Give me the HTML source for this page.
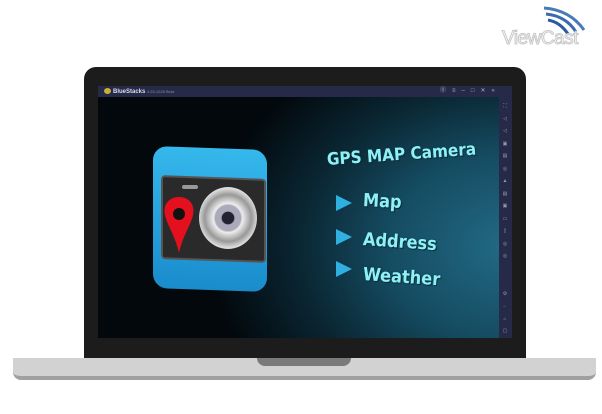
<!DOCTYPE html>
<html><head><style>
body{margin:0;width:602px;height:414px;background:#fff;position:relative;overflow:hidden;font-family:"Liberation Sans",sans-serif}
.a{position:absolute}
.txt{color:#8ff0f5;font-family:"Liberation Sans Narrow","DejaVu Sans Condensed","Liberation Sans",sans-serif;font-weight:bold;text-shadow:0 0 2px #0a3a48,1px 1px 0 #0a2a35;white-space:nowrap}
.tri{width:0;height:0;border-top:8px solid transparent;border-bottom:8px solid transparent;border-left:16px solid #2fb0e0}
</style></head><body>
<svg class="a" style="left:540px;top:4px" width="60" height="30"><path d="M4 4 Q30 6 44 26" stroke="#4a7ab8" stroke-width="3" fill="none"/><path d="M6 10 Q26 12 36 28" stroke="#3a6ab0" stroke-width="3" fill="none"/><path d="M8 16 Q20 18 28 30" stroke="#2a5aa0" stroke-width="3" fill="none"/></svg>
<div class="a" style="left:502px;top:28px;font-size:19px;color:#fff;-webkit-text-stroke:1px #c8c8c8;letter-spacing:-0.5px">ViewCast</div>
<div class="a" style="left:84px;top:67px;width:442px;height:295px;background:#1c1c1c;border-radius:12px 12px 0 0"></div>
<div class="a" style="left:13px;top:358px;width:583px;height:22px;background:#d2d2d2;border-radius:0 0 8px 8px;border-bottom:4px solid #a0a0a0;box-sizing:border-box"></div>
<div class="a" style="left:257px;top:358px;width:94px;height:8px;background:#7a7a7a;border-radius:0 0 8px 8px"></div>
<div class="a" style="left:98px;top:86px;width:414px;height:11px;background:#262a48"></div>
<div class="a" style="left:104px;top:88px;width:7px;height:6px;background:#c8b030;border-radius:50%"></div>
<div class="a" style="left:113px;top:86px;font-size:6px;line-height:11px;color:#dde;font-weight:bold">BlueStacks <span style="font-weight:normal;color:#889;font-size:4px">4.60.1028 Beta</span></div>
<div class="a" style="left:440px;top:86px;font-size:6px;line-height:11px;color:#aab;letter-spacing:6px">⓪≡–□✕«</div>
<div class="a" style="left:499px;top:97px;width:13px;height:241px;background:#262a48"></div>
<div class="a" style="left:501px;top:100px;width:8px;font-size:5px;line-height:12.5px;color:#99a;text-align:center">⛶<br>◁<br>◁<br>▣<br>▤<br>◎<br>▲<br>▤<br>▣<br>▭<br>▯<br>◎<br>◎<br><br><br>⚙<br>←<br>⌂<br>▢</div>
<div class="a" style="left:98px;top:97px;width:401px;height:241px;background:radial-gradient(ellipse 300px 230px at 410px 150px,#226a84 0%,#154c62 40%,#0a2632 70%,#02080c 100%)"></div>
<div class="a" style="left:153px;top:148px;width:114px;height:142px;background:linear-gradient(180deg,#35b8ec,#1a8ccc);border-radius:14px;transform:skewY(2deg)"></div>
<div class="a" style="left:161px;top:177px;width:101px;height:80px;background:#2a2a2a;border:2px solid #555;border-radius:4px;transform:skewY(2deg)"></div>
<div class="a" style="left:182px;top:185px;width:16px;height:4px;background:#999;border-radius:2px"></div>
<div class="a" style="left:199px;top:187px;width:58px;height:62px;border-radius:50%;background:radial-gradient(circle,#223 0 14%,#aab 16% 30%,#eee 34%,#999 55%,#ddd 70%,#888 100%)"></div>
<svg class="a" style="left:163px;top:195px" width="32" height="62"><path d="M16 2 C4 2 0 12 2 20 C4 30 12 40 16 58 C20 40 28 30 30 20 C32 12 28 2 16 2Z" fill="#e5101e"/><circle cx="16" cy="19" r="6" fill="#111"/></svg>
<div class="a txt" style="left:327px;top:150px;font-size:17px;transform:rotate(-4deg);transform-origin:left">GPS MAP Camera</div>
<div class="a tri" style="left:336px;top:195px"></div>
<div class="a txt" style="left:363px;top:191px;font-size:18px;transform:rotate(3deg)">Map</div>
<div class="a tri" style="left:336px;top:229px"></div>
<div class="a txt" style="left:363px;top:229px;font-size:18px;transform:rotate(4deg);transform-origin:left">Address</div>
<div class="a tri" style="left:336px;top:261px"></div>
<div class="a txt" style="left:363px;top:264px;font-size:18px;transform:rotate(4deg);transform-origin:left">Weather</div>
</body></html>
